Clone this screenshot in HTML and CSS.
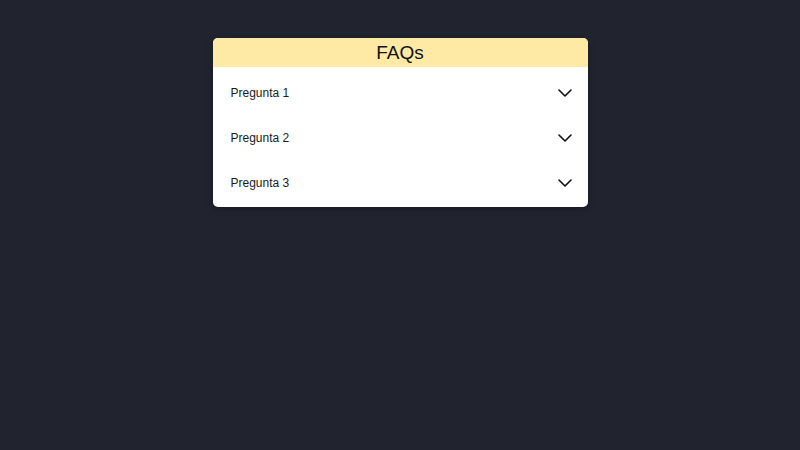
FILE: index.html
```html
<!DOCTYPE html>
<html lang="es">
<head>
    <meta charset="UTF-8">
    <meta name="viewport" content="width=device-width, initial-scale=1.0">
    <title>FAQs</title>
    <link rel="stylesheet" href="styles.css">
</head>
<body>
    <div class="faq-card">
        <h1 class="faq-title">FAQs</h1>
        <div class="faq-list">
            <div class="faq-item">
                <span>Pregunta 1</span>
                <svg class="chevron" viewBox="0 0 14 8" width="14" height="8"><path d="M1 1l6 6 6-6" /></svg>
            </div>
            <div class="faq-item">
                <span>Pregunta 2</span>
                <svg class="chevron" viewBox="0 0 14 8" width="14" height="8"><path d="M1 1l6 6 6-6" /></svg>
            </div>
            <div class="faq-item">
                <span>Pregunta 3</span>
                <svg class="chevron" viewBox="0 0 14 8" width="14" height="8"><path d="M1 1l6 6 6-6" /></svg>
            </div>
        </div>
    </div>
</body>
</html>
```

FILE: styles.css
```css
body {
    font-family: 'Liberation Sans', Arial, sans-serif;
    background-color: #21232f;
    display: flex;
    justify-content: center;
    align-items: flex-start;
    height: 100vh;
    margin: 0;
}
.faq-card {
    background: #fff;
    margin-top: 38px;
    width: 375px;
    border-radius: 5px;
    overflow: hidden;
    box-shadow: 0 2px 6px rgba(0, 0, 0, 0.3);
}
.faq-title {
    margin: 0;
    height: 29px;
    line-height: 30px;
    background-color: #fee9a5;
    text-align: center;
    font-size: 19px;
    font-weight: normal;
    color: #111;
}
.faq-list {
    padding: 3px 0 2px;
}
.faq-item {
    display: flex;
    justify-content: space-between;
    align-items: center;
    height: 45px;
    padding: 0 16px 0 18px;
    font-size: 12px;
    color: #1a1a1a;
}
.chevron {
    fill: none;
    stroke: #111;
    stroke-width: 1.6;
    stroke-linecap: round;
    stroke-linejoin: round;
}
```
